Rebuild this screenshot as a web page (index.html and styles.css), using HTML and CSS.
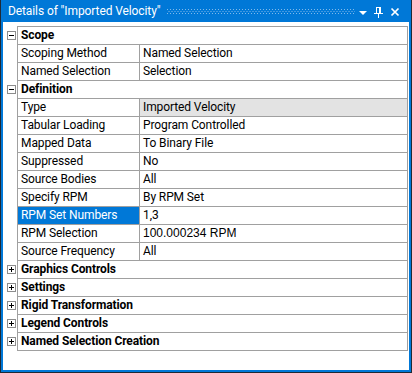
FILE: index.html
```html
<!DOCTYPE html>
<html>
<head>
<meta charset="utf-8">
<link rel="stylesheet" href="styles.css">
</head>
<body>
<div class="window">
  <div class="titlebar">
    <span class="title">Details of "Imported Velocity"</span>
    <div class="dots">
      <svg width="100%" height="6">
        <defs>
          <pattern id="dp" width="3" height="4" patternUnits="userSpaceOnUse">
            <rect x="0" y="0" width="1" height="1" fill="#7fb9ea"/>
            <rect x="1.5" y="2" width="1" height="1" fill="#7fb9ea"/>
          </pattern>
        </defs>
        <rect width="100%" height="6" fill="url(#dp)"/>
      </svg>
    </div>
    <svg class="icons" width="48" height="22" viewBox="0 0 48 22">
      <polygon points="3,11 11,11 7,15" fill="#fff"/>
      <g fill="#fff">
        <rect x="20" y="7" width="1" height="7"/>
        <rect x="23" y="7" width="2" height="7"/>
        <rect x="20" y="7" width="4" height="1"/>
        <rect x="18" y="13" width="9" height="1"/>
        <rect x="22" y="14" width="1" height="4"/>
      </g>
      <path d="M35.5 8.5 L42.5 15.5 M42.5 8.5 L35.5 15.5" stroke="#fff" stroke-width="1.7" fill="none"/>
    </svg>
  </div>
  <div class="content">
    <div class="row group"><span class="tog minus"></span><div class="cell head">Scope</div></div>
    <div class="row"><span class="tog"></span><div class="cell label">Scoping Method</div><div class="cell value">Named Selection</div></div>
    <div class="row"><span class="tog"></span><div class="cell label">Named Selection</div><div class="cell value">Selection</div></div>
    <div class="row group"><span class="tog minus"></span><div class="cell head">Definition</div></div>
    <div class="row"><span class="tog"></span><div class="cell label">Type</div><div class="cell value grey">Imported Velocity</div></div>
    <div class="row"><span class="tog"></span><div class="cell label">Tabular Loading</div><div class="cell value">Program Controlled</div></div>
    <div class="row"><span class="tog"></span><div class="cell label">Mapped Data</div><div class="cell value">To Binary File</div></div>
    <div class="row"><span class="tog"></span><div class="cell label">Suppressed</div><div class="cell value">No</div></div>
    <div class="row"><span class="tog"></span><div class="cell label">Source Bodies</div><div class="cell value">All</div></div>
    <div class="row"><span class="tog"></span><div class="cell label">Specify RPM</div><div class="cell value">By RPM Set</div></div>
    <div class="row"><span class="tog"></span><div class="cell label selected">RPM Set Numbers</div><div class="cell value">1,3</div></div>
    <div class="row"><span class="tog"></span><div class="cell label">RPM Selection</div><div class="cell value alt">100.000234 RPM</div></div>
    <div class="row"><span class="tog"></span><div class="cell label">Source Frequency</div><div class="cell value">All</div></div>
    <div class="row group"><span class="tog plus"></span><div class="cell head">Graphics Controls</div></div>
    <div class="row group"><span class="tog plus"></span><div class="cell head">Settings</div></div>
    <div class="row group"><span class="tog plus"></span><div class="cell head">Rigid Transformation</div></div>
    <div class="row group"><span class="tog plus"></span><div class="cell head">Legend Controls</div></div>
    <div class="row group last"><span class="tog plus"></span><div class="cell head">Named Selection Creation</div></div>
  </div>
</div>
</body>
</html>
```

FILE: styles.css
```css
html, body {
  margin: 0;
  padding: 0;
  background: #fff;
}
.window {
  width: 412px;
  height: 373px;
  box-sizing: border-box;
  background: #0078d7;
  border: 1px solid #1e2a36;
  border-top: none;
  padding: 0 2px 2px 2px;
  display: flex;
  flex-direction: column;
  font-family: Roboto, "Noto Sans", sans-serif;
}
.titlebar {
  height: 22px;
  margin: 0 -3px;
  padding-left: 8px;
  padding-right: 8px;
  display: flex;
  align-items: center;
  color: #fff;
  flex: none;
}
.title {
  font-size: 12px;
  letter-spacing: -0.1px;
  line-height: 22px;
  white-space: nowrap;
}
.dots {
  flex: 1;
  height: 6px;
  margin-left: 6px;
  margin-top: 2px;
}
.dots svg { display: block; }
.icons {
  flex: none;
  margin-left: 1px;
}
.content {
  flex: 1;
  background: #fff;
  padding: 4px 1px 0 0;
  display: flex;
  flex-direction: column;
}
.row {
  display: flex;
  height: 18px;
  font-size: 12px;
  color: #000;
}
.tog {
  width: 14px;
  flex: none;
  position: relative;
}
.tog.minus::before, .tog.plus::before {
  content: "";
  position: absolute;
  left: 4px;
  top: 5px;
  width: 7px;
  height: 7px;
  border: 1px solid #8c8c8c;
  background: #fff;
}
.tog.minus::after, .tog.plus::after {
  content: "";
  position: absolute;
  left: 6px;
  top: 7px;
  width: 5px;
  height: 5px;
  background: linear-gradient(#000, #000) no-repeat 0 2px / 5px 1px;
}
.tog.plus::after {
  background:
    linear-gradient(#000, #000) no-repeat 0 2px / 5px 1px,
    linear-gradient(#000, #000) no-repeat 2px 0 / 1px 5px;
}
.cell {
  box-sizing: border-box;
  border-top: 1px solid #a0a0a0;
  height: 18px;
  line-height: 17px;
  padding-left: 3px;
  white-space: nowrap;
  overflow: hidden;
  letter-spacing: -0.1px;
}
.head {
  flex: 1;
  border-left: 1px solid #a0a0a0;
  border-right: 1px solid #a0a0a0;
  font-weight: bold;
}
.label {
  width: 122px;
  flex: none;
  border-left: 1px solid #a0a0a0;
  padding-left: 3px;
}
.value {
  flex: 1;
  border-left: 1px solid #a0a0a0;
  border-right: 1px solid #a0a0a0;
}
.grey { background: #e3e3e3; }
.selected { background: #0078d7; color: #fff; }
.alt { font-family: "Liberation Sans", Arial, sans-serif; letter-spacing: 0; }
.last .cell { border-bottom: 1px solid #a0a0a0; height: 19px; }
```
